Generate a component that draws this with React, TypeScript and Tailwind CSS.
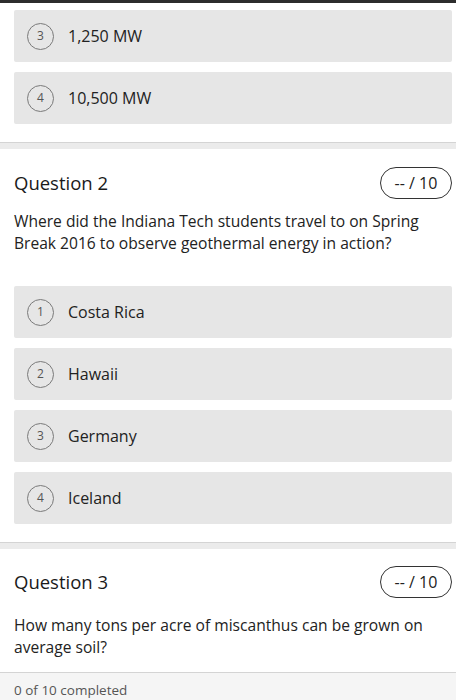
import React from 'react';

const font = { fontFamily: '"Open Sans", "Noto Sans", sans-serif' };

interface OptionProps {
  n: number;
  label: string;
}

const Option: React.FC<OptionProps> = ({ n, label }) => (
  <div className="h-[52px] bg-[#e6e6e6] rounded-[2px] flex items-center pl-[13px]">
    <div className="w-[27px] h-[27px] rounded-full border-[1.5px] border-[#7a7a7a] flex items-center justify-center text-[12px] text-[#555]">
      {n}
    </div>
    <span className="ml-[14px] text-[16px] text-[#222]">{label}</span>
  </div>
);

const Badge = () => (
  <div className="h-[32px] w-[72px] rounded-full border-[1.5px] border-[#333] flex items-center justify-center text-[16px] text-[#222]">
    -- / 10
  </div>
);

const Divider = () => (
  <div className="border-t border-[#d4d4d4] h-[7px] bg-[#ebebeb]" />
);

export default function App() {
  return (
    <div className="w-[456px] h-[700px] bg-white overflow-hidden flex flex-col" style={font}>
      <div className="h-[3px] bg-[#2d2d2d]" />

      <div className="pl-[14px] pr-[4px] pt-[7px] pb-[18px] flex flex-col gap-[10px]">
        <Option n={3} label="1,250 MW" />
        <Option n={4} label="10,500 MW" />
      </div>

      <Divider />

      <div className="pl-[14px] pr-[4px] pt-[18px] pb-[18px]">
        <div className="flex items-center justify-between">
          <h2 className="text-[18.5px] text-[#1a1a1a]">Question 2</h2>
          <Badge />
        </div>
        <p className="mt-[11px] pr-[10px] text-[15.6px] leading-[22px] text-[#222]">
          Where did the Indiana Tech students travel to on Spring Break 2016 to observe geothermal energy in action?
        </p>
        <div className="mt-[32px] flex flex-col gap-[10px]">
          <Option n={1} label="Costa Rica" />
          <Option n={2} label="Hawaii" />
          <Option n={3} label="Germany" />
          <Option n={4} label="Iceland" />
        </div>
      </div>

      <Divider />

      <div className="pl-[14px] pr-[4px] pt-[17px] flex-1">
        <div className="flex items-center justify-between">
          <h2 className="text-[18.5px] text-[#1a1a1a]">Question 3</h2>
          <Badge />
        </div>
        <p className="mt-[16px] pr-[10px] text-[15.6px] leading-[22px] text-[#222]">
          How many tons per acre of miscanthus can be grown on average soil?
        </p>
      </div>

      <div className="h-[28px] border-t border-[#d4d4d4] bg-[#f5f5f5] px-[14px] pt-[7px] text-[13.5px] leading-[20px] text-[#555]">
        0 of 10 completed
      </div>
    </div>
  );
}
